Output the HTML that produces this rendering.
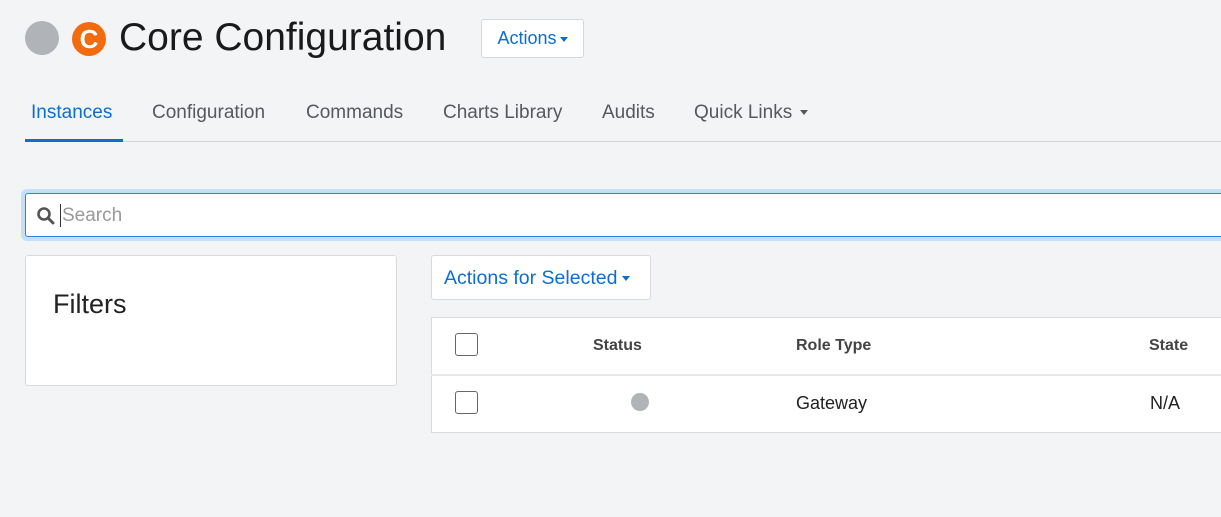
<!DOCTYPE html>
<html><head><style>
body{margin:0;width:1221px;height:517px;background:#f3f4f6;font-family:"Liberation Sans",sans-serif;position:relative;overflow:hidden}
.a{position:absolute}
.tab{position:absolute;top:102px;font-size:19px;color:#55585d}
.caret{display:inline-block;width:0;height:0;border-left:4.5px solid transparent;border-right:4.5px solid transparent;border-top:5px solid currentColor;vertical-align:middle;margin-left:5px}
.cb{position:absolute;width:23px;height:23px;border:1.5px solid #666;border-radius:3px;background:#fff;box-sizing:border-box}
</style></head><body>
<div class="a" style="left:25px;top:21px;width:34px;height:34px;border-radius:50%;background:#b0b3b7"></div>
<div class="a" style="left:72px;top:22px;width:34px;height:34px;border-radius:50%;background:#f26b0f"></div>
<div class="a" style="left:72px;top:22px;width:34px;height:34px;color:#fff;font-weight:bold;font-size:26px;line-height:34px;text-align:center">C</div>
<div class="a" style="left:119px;top:14px;font-size:39px;color:#1a1a1a;line-height:48px">Core Configuration</div>
<div class="a" style="left:481px;top:19px;width:101px;height:37px;background:#fff;border:1px solid #d5d7da;border-radius:3px;color:#0a6fd1;font-size:18px;line-height:37px;text-align:center">Actions<span class="caret" style="margin-left:3px"></span></div>
<div class="tab" style="left:31px;color:#0a6fd1">Instances</div>
<div class="tab" style="left:152px">Configuration</div>
<div class="tab" style="left:306px">Commands</div>
<div class="tab" style="left:443px">Charts Library</div>
<div class="tab" style="left:602px">Audits</div>
<div class="tab" style="left:694px">Quick Links<span class="caret" style="margin-left:8px"></span></div>
<div class="a" style="left:25px;top:141px;width:1196px;height:1px;background:#d5d7da"></div>
<div class="a" style="left:25px;top:139px;width:98px;height:3px;background:#0a6fd1"></div>
<div class="a" style="left:21px;top:189px;width:1215px;height:52px;background:#c4e0f8;border-radius:6px"></div>
<div class="a" style="left:25px;top:193px;width:1200px;height:44px;background:#fff;border:1px solid #2a87e0;border-radius:3px;box-sizing:border-box"></div>
<svg class="a" style="left:36px;top:206px" width="20" height="20" viewBox="0 0 20 20"><circle cx="8" cy="8" r="5.5" fill="none" stroke="#555" stroke-width="2.6"/><line x1="12" y1="12" x2="17" y2="17" stroke="#555" stroke-width="3" stroke-linecap="round"/></svg>
<div class="a" style="left:60px;top:204px;width:1px;height:23px;background:#333"></div>
<div class="a" style="left:62px;top:205px;font-size:19px;color:#999">Search</div>
<div class="a" style="left:25px;top:255px;width:372px;height:131px;background:#fff;border:1px solid #d8dadd;border-radius:3px;box-sizing:border-box"></div>
<div class="a" style="left:53px;top:289px;font-size:27px;color:#222">Filters</div>
<div class="a" style="left:431px;top:255px;width:220px;height:45px;background:#fff;border:1px solid #d8dadd;border-radius:3px;box-sizing:border-box;color:#0a6fd1;font-size:19.5px;line-height:45px;padding-left:12px">Actions for Selected<span class="caret"></span></div>
<div class="a" style="left:431px;top:317px;width:800px;height:116px;background:#fff;border:1px solid #d8dadd;box-sizing:border-box"></div>
<div class="a" style="left:431px;top:374px;width:800px;height:2px;background:#e6e7e9"></div>
<div class="cb" style="left:455px;top:333px"></div>
<div class="cb" style="left:455px;top:391px"></div>
<div class="a" style="left:593px;top:337px;font-size:16px;font-weight:bold;color:#444">Status</div>
<div class="a" style="left:796px;top:337px;font-size:16px;font-weight:bold;color:#444">Role Type</div>
<div class="a" style="left:1149px;top:337px;font-size:16px;font-weight:bold;color:#444">State</div>
<div class="a" style="left:631px;top:393px;width:18px;height:18px;border-radius:50%;background:#b0b3b7"></div>
<div class="a" style="left:796px;top:393px;font-size:18px;color:#222">Gateway</div>
<div class="a" style="left:1150px;top:393px;font-size:18px;color:#222">N/A</div>
</body></html>
